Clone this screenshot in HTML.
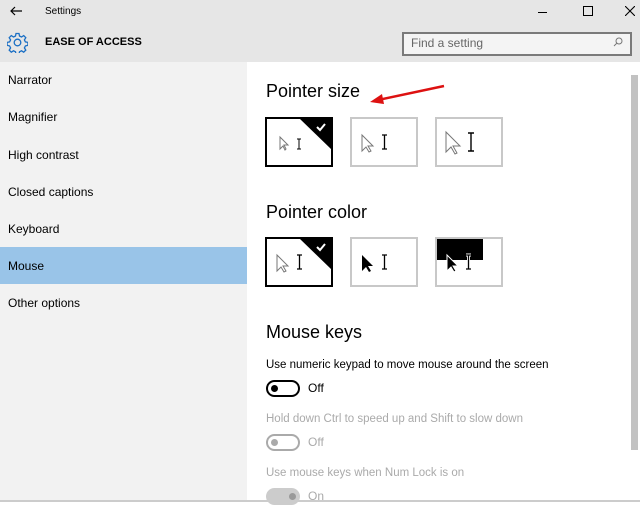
<!DOCTYPE html>
<html><head><style>
body{margin:0;width:640px;height:502px;overflow:hidden;font-family:"Liberation Sans",sans-serif;background:#fff;position:relative}
.a{position:absolute}
.top{left:0;top:0;width:640px;height:62px;background:#e6e6e6}
.side{left:0;top:62px;width:247px;height:440px;background:#f2f2f2}
.item{position:absolute;left:8px;font-size:12px;color:#000}
.box{position:absolute;width:64px;height:46px;border:2px solid #c8c8c8;background:#fff;overflow:hidden}
.box.sel{border-color:#000}
h2{position:absolute;margin:0;font-weight:normal;font-size:18px;color:#000;left:266px}
.t{position:absolute;left:266px;font-size:11.5px}
.sw{position:absolute;left:266px;width:30px;height:13px;border:2px solid #000;border-radius:9px}
.sw i{position:absolute;left:3px;top:3px;width:7px;height:7px;border-radius:50%;background:#000}
</style></head><body>
<div class="a top"></div>
<svg class="a" style="left:10px;top:6px" width="12" height="10"><path d="M1 5h11M5 1L1 5l4 4" stroke="#000" fill="none" stroke-width="1.2"/></svg>
<div class="a" style="left:45px;top:6px;font-size:10px">Settings</div>
<div class="a" style="left:538px;top:12px;width:9px;height:1px;background:#000"></div>
<div class="a" style="left:583px;top:6px;width:8px;height:8px;border:1px solid #000"></div>
<svg class="a" style="left:625px;top:6px" width="10" height="10"><path d="M0 0L10 10M10 0L0 10" stroke="#000" stroke-width="1.1"/></svg>
<svg class="a" style="left:7px;top:32px" width="21" height="21" viewBox="0 0 21 21"><g fill="none" stroke="#1b6fc4" stroke-width="1.3"><circle cx="10.5" cy="10.5" r="3.3"/><path d="M9 1.5h3l.5 2.5 2 1 2.2-1.4 2.1 2.1-1.4 2.2 1 2 2.5.5v3l-2.5.5-1 2 1.4 2.2-2.1 2.1-2.2-1.4-2 1-.5 2.5h-3l-.5-2.5-2-1-2.2 1.4-2.1-2.1 1.4-2.2-1-2-2.5-.5v-3l2.5-.5 1-2-1.4-2.2 2.1-2.1 2.2 1.4 2-1z"/></g></svg>
<div class="a" style="left:45px;top:36px;font-size:11px;font-weight:bold">EASE OF ACCESS</div>
<div class="a" style="left:402px;top:32px;width:226px;height:20px;border:2px solid #7a7a7a;background:#f4f4f4"></div>
<div class="a" style="left:411px;top:36px;font-size:12px;color:#666">Find a setting</div>
<svg class="a" style="left:613px;top:37px" width="10" height="10"><circle cx="6" cy="4" r="3" fill="none" stroke="#777"/><path d="M4 6L1 9" stroke="#777"/></svg>
<div class="a side"></div>
<div class="a" style="left:0;top:247px;width:247px;height:37px;background:#99c4e8"></div>
<div class="item" style="top:73px">Narrator</div>
<div class="item" style="top:110px">Magnifier</div>
<div class="item" style="top:148px">High contrast</div>
<div class="item" style="top:185px">Closed captions</div>
<div class="item" style="top:222px">Keyboard</div>
<div class="item" style="top:259px">Mouse</div>
<div class="item" style="top:296px">Other options</div>
<div class="a" style="left:631px;top:75px;width:7px;height:375px;background:#c2c2c2"></div>
<div class="a" style="left:0;top:500px;width:640px;height:2px;background:#ccc"></div>
<h2 style="top:81px">Pointer size</h2>
<svg class="a" style="left:368px;top:84px" width="80" height="22"><line x1="76" y1="2" x2="10" y2="16" stroke="#d11" stroke-width="2.5"/><polygon points="2,18 14,10 16,20" fill="#d11"/></svg>
<h2 style="top:202px">Pointer color</h2>
<h2 style="top:322px">Mouse keys</h2>
<div class="box sel" style="left:265px;top:117px"><svg width="64" height="46"><polygon points="33,0 64,0 64,30" fill="#000"/><path d="M50 8l3 3 5-6" stroke="#fff" stroke-width="2" fill="none"/><path d="M13 18v12l3-3 2 4 1-1-2-4h4z" fill="#fff" stroke="#777"/><path d="M30 20h4M32 20v10M30 30h4" stroke="#000"/></svg></div>
<div class="box" style="left:350px;top:117px"><svg width="64" height="46"><path d="M10 16v16l4-4 3 5 2-1-3-5h5z" fill="#fff" stroke="#777"/><path d="M30 16h5M32.5 16v14M30 30h5" stroke="#000" stroke-width="1.3"/></svg></div>
<div class="box" style="left:435px;top:117px"><svg width="64" height="46"><path d="M9 13v20l5-5 4 7 2-1-4-7h7z" fill="#fff" stroke="#777"/><path d="M31 14h6M34 14v18M31 32h6" stroke="#000" stroke-width="1.4"/></svg></div>
<div class="box sel" style="left:265px;top:237px"><svg width="64" height="46"><polygon points="33,0 64,0 64,30" fill="#000"/><path d="M50 8l3 3 5-6" stroke="#fff" stroke-width="2" fill="none"/><path d="M10 16v16l4-4 3 5 2-1-3-5h5z" fill="#fff" stroke="#777"/><path d="M30 16h5M32.5 16v14M30 30h5" stroke="#000" stroke-width="1.3"/></svg></div>
<div class="box" style="left:350px;top:237px"><svg width="64" height="46"><path d="M10 16v16l4-4 3 5 2-1-3-5h5z" fill="#000"/><path d="M30 16h5M32.5 16v14M30 30h5" stroke="#000" stroke-width="1.3"/></svg></div>
<div class="box" style="left:435px;top:237px"><svg width="64" height="46"><rect x="0" y="0" width="46" height="21" fill="#000"/><path d="M10 16v16l4-4 3 5 2-1-3-5h5z" fill="#000" stroke="#fff"/><path d="M29 16h5M31.5 16v14M29 30h5" stroke="#fff" stroke-width="3"/><path d="M29 16h5M31.5 16v14M29 30h5" stroke="#000" stroke-width="1.3"/></svg></div>
<div class="t" style="top:359px">Use numeric keypad to move mouse around the screen</div>
<div class="sw" style="top:380px"><i></i></div>
<div class="a" style="left:308px;top:381px;font-size:12px">Off</div>
<div class="t" style="top:413px;color:#aaa">Hold down Ctrl to speed up and Shift to slow down</div>
<div class="sw" style="top:434px;border-color:#aaa"><i style="background:#aaa"></i></div>
<div class="a" style="left:308px;top:435px;font-size:12px;color:#aaa">Off</div>
<div class="t" style="top:467px;color:#aaa">Use mouse keys when Num Lock is on</div>
<div class="sw" style="top:488px;border-color:#ccc;background:#ccc"><i style="left:21px;background:#999"></i></div>
<div class="a" style="left:308px;top:489px;font-size:12px;color:#aaa">On</div>
</body></html>
